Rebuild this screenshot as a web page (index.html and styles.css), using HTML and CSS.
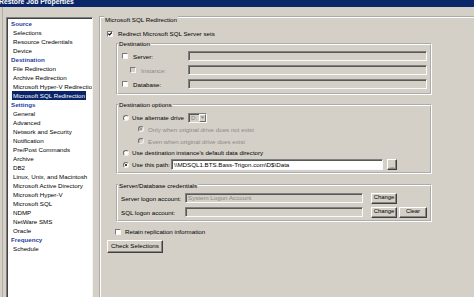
FILE: index.html
```html
<!DOCTYPE html>
<html>
<head>
<meta charset="utf-8">
<title>Restore Job Properties</title>
<link rel="stylesheet" href="styles.css">
</head>
<body>
<div class="titlebar"><span class="title">Restore Job Properties</span></div>
<div class="main">
  <ul class="tree">
    <li class="head">Source</li>
    <li>Selections</li>
    <li>Resource Credentials</li>
    <li>Device</li>
    <li class="head">Destination</li>
    <li>File Redirection</li>
    <li>Archive Redirection</li>
    <li>Microsoft Hyper-V Redirection</li>
    <li><span class="sel">Microsoft SQL Redirection</span></li>
    <li class="head">Settings</li>
    <li>General</li>
    <li>Advanced</li>
    <li>Network and Security</li>
    <li>Notification</li>
    <li>Pre/Post Commands</li>
    <li>Archive</li>
    <li>DB2</li>
    <li>Linux, Unix, and Macintosh</li>
    <li>Microsoft Active Directory</li>
    <li>Microsoft Hyper-V</li>
    <li>Microsoft SQL</li>
    <li>NDMP</li>
    <li>NetWare SMS</li>
    <li>Oracle</li>
    <li class="head">Frequency</li>
    <li>Schedule</li>
  </ul>

  <fieldset class="outer">
    <legend class="outer-legend">Microsoft SQL Redirection</legend>

    <div class="row redirect">
      <span class="cb"><svg viewBox="0 0 6 6" width="6" height="6"><path d="M1.3 2.7 L2.5 3.9 L4.8 1.5" fill="none" stroke="#000" stroke-width="1.1"/></svg></span>
      <span>Redirect Microsoft SQL Server sets</span>
    </div>

    <fieldset class="sub dest">
      <legend>Destination</legend>
      <div class="dest-grid">
        <div class="opt"><span class="cb"></span><span>Server:</span></div>
        <div class="input"></div>
        <div class="opt indent"><span class="cb dis"></span><span class="grey">Instance:</span></div>
        <div class="input"></div>
        <div class="opt"><span class="cb"></span><span>Database:</span></div>
        <div class="input"></div>
      </div>
    </fieldset>

    <fieldset class="sub opts">
      <legend>Destination options</legend>
      <div class="opt-rows">
        <div class="orow">
          <span class="rb"></span><span class="lbl-drive">Use alternate drive</span>
          <div class="combo"><span class="combo-text">D:</span><span class="combo-btn"><svg viewBox="0 0 5 3" width="5" height="3"><path d="M0.5 0.5 H4.5 L2.5 2.7 Z" fill="#8a8780"/></svg></span></div>
        </div>
        <div class="orow sub-opt">
          <span class="rb dis on"></span><span class="grey">Only when original drive does not exist</span>
        </div>
        <div class="orow sub-opt">
          <span class="rb dis"></span><span class="grey">Even when original drive does exist</span>
        </div>
        <div class="orow">
          <span class="rb"></span><span>Use destination instance's default data directory</span>
        </div>
        <div class="orow">
          <span class="rb on"></span><span class="lbl-path">Use this path:</span>
          <div class="input white path">\\MDSQL1.BTS.Bass-Trigon.com\D$\Data</div>
          <button class="btn browse">...</button>
        </div>
      </div>
    </fieldset>

    <fieldset class="sub creds">
      <legend>Server/Database credentials</legend>
      <div class="cred-grid">
        <span>Server logon account:</span>
        <div class="input cred-input"><span class="grey">System Logon Account</span></div>
        <div class="cred-btns"><button class="btn small">Change</button></div>
        <span>SQL logon account:</span>
        <div class="input cred-input"></div>
        <div class="cred-btns"><button class="btn small">Change</button><button class="btn small clear">Clear</button></div>
      </div>
    </fieldset>

    <div class="row retain">
      <span class="cb"></span>
      <span>Retain replication information</span>
    </div>

    <button class="btn check">Check Selections</button>
  </fieldset>
</div>
</body>
</html>
```

FILE: styles.css
```css
* { box-sizing: border-box; }
html, body { margin: 0; padding: 0; }
body {
  width: 474px;
  height: 297px;
  overflow: hidden;
  background: #d4d0c8;
  font-family: "Liberation Sans", Arial, sans-serif;
  font-size: 6.2px;
  color: #000;
}

.titlebar {
  height: 7px;
  background: #0c2769;
  overflow: hidden;
  color: #fff;
  font-weight: bold;
  font-size: 6.8px;
  line-height: 7px;
}
.title { display: block; margin: -2px 0 0 -1px; }

.main {
  display: flex;
  align-items: flex-start;
  height: 290px;
  background: linear-gradient(to right, transparent 2px, #b3afa7 2px, #b3afa7 3px, transparent 3px);
}

.tree {
  list-style: none;
  margin: 10px 0 0 6px;
  padding: 1px 0 0 1px;
  width: 87px;
  height: 290px;
  flex: none;
  background: #fff;
  border-top: 1px solid #808080;
  border-left: 1px solid #808080;
  border-right: 1px solid #f4f3f1;
  box-shadow: inset 1px 1px 0 #404040;
  overflow: hidden;
}
.tree li {
  height: 9px;
  line-height: 9px;
  padding-left: 5px;
  white-space: nowrap;
}
.tree li.head {
  padding-left: 3px;
  font-weight: bold;
  color: #1f3f9f;
}
.sel {
  display: inline-block;
  margin-left: -1px;
  padding: 0 1px;
  height: 9px;
  background: #0a246a;
  color: #fff;
}

fieldset {
  margin: 0;
  border: 2px groove #fff;
  min-width: 0;
}
legend {
  padding: 0 1px;
  line-height: 7px;
  white-space: nowrap;
}

.outer {
  flex: none;
  margin: 3px 0 0 6px;
  width: 400px;
  height: 300px;
  padding: 0 0 0 6px;
}
.outer-legend {
  margin-left: -3px;
  padding: 6px 1px 0;
}

.row {
  display: flex;
  align-items: center;
  height: 9px;
  white-space: nowrap;
}
.redirect { margin-top: 6px; gap: 5px; }

.cb {
  flex: none;
  display: inline-flex;
  width: 6px;
  height: 6px;
  background: #fff;
  border-top: 1px solid #7a7872;
  border-left: 1px solid #7a7872;
  border-bottom: 1px solid #f6f5f3;
  border-right: 1px solid #f6f5f3;
  position: relative;
}
.cb svg { position: absolute; left: -1px; top: -1px; }
.cb.dis { background: #d4d0c8; }

.rb {
  flex: none;
  display: inline-flex;
  align-items: center;
  justify-content: center;
  width: 6px;
  height: 6px;
  border-radius: 50%;
  background: #fff;
  border: 1px solid;
  border-color: #6e6c67 #f2f1ee #f2f1ee #6e6c67;
}
.rb.dis { background: #d4d0c8; }
.rb.on::after {
  content: "";
  width: 2px;
  height: 2px;
  border-radius: 50%;
  background: #000;
}
.rb.dis.on::after { background: #8a8780; }

.grey { color: #8d8a84; }

.sub {
  margin: 2px 0 0 9px;
  width: 316px;
  padding: 4px 3px 4px 4px;
}
.sub legend { margin-left: -4px; }

.dest-grid {
  display: grid;
  grid-template-columns: 66px 239px;
  grid-auto-rows: 10px;
  row-gap: 4px;
  align-items: center;
}
.opt {
  display: flex;
  align-items: center;
  gap: 5px;
  white-space: nowrap;
}
.opt.indent { padding-left: 8px; }

.input {
  height: 10px;
  border-top: 1px solid #808080;
  border-left: 1px solid #808080;
  border-bottom: 1px solid #fbfaf9;
  border-right: 1px solid #fbfaf9;
  box-shadow: inset 1px 1px 0 #5a5852;
  background: #d4d0c8;
  padding-left: 2px;
  line-height: 8px;
  white-space: nowrap;
  overflow: hidden;
}
.input.white { background: #fff; }

.opts { margin-top: 6px; padding: 4px 3px 2px 4px; }
.opt-rows {
  display: flex;
  flex-direction: column;
  gap: 0.75px;
}
.orow {
  display: flex;
  align-items: center;
  height: 11px;
  white-space: nowrap;
  gap: 3px;
  padding-left: 1px;
}
.orow.sub-opt { padding-left: 16px; gap: 4px; }
.lbl-drive { width: 53px; }
.lbl-path { width: 36px; }

.combo {
  display: flex;
  width: 19px;
  height: 10px;
  border-top: 1px solid #808080;
  border-left: 1px solid #808080;
  border-bottom: 1px solid #fbfaf9;
  border-right: 1px solid #fbfaf9;
  box-shadow: inset 1px 1px 0 #5a5852;
  background: #d4d0c8;
}
.combo-text {
  flex: 1;
  color: #8d8a84;
  line-height: 8px;
  padding-left: 2px;
}
.combo-btn {
  width: 7px;
  height: 8px;
  display: flex;
  align-items: center;
  justify-content: center;
  border: 1px solid;
  border-color: #fff #6e6c67 #6e6c67 #fff;
}

.path { width: 212px; height: 11px; line-height: 9px; }

.btn {
  font-family: inherit;
  font-size: 6.2px;
  color: #000;
  background: #d4d0c8;
  border: 1px solid;
  border-color: #fff #404040 #404040 #fff;
  box-shadow: inset -1px -1px 0 #8a8780;
  padding: 0;
  margin: 0;
  text-align: center;
  white-space: nowrap;
  line-height: 1;
}
.browse {
  width: 10px;
  height: 11px;
  margin-left: 1px;
  line-height: 12px;
  font-size: 5.5px;
}

.creds { margin-top: 7.5px; padding: 4.5px 3px 3px 3px; }
.creds legend { margin-left: -3px; }
.cred-grid {
  display: grid;
  grid-template-columns: 64px 178px 66px;
  grid-auto-rows: 10px;
  row-gap: 4px;
  align-items: center;
  white-space: nowrap;
}
.cred-btns {
  display: flex;
  gap: 2px;
  padding-left: 8px;
  height: 10px;
}
.btn.small {
  width: 26px;
  height: 10.5px;
  font-size: 5.9px;
}
.btn.clear { width: 28px; }

.retain { margin: 5px 0 0 8px; gap: 4px; }

.btn.check {
  display: block;
  margin-top: 4px;
  width: 56px;
  height: 13px;
}
```
